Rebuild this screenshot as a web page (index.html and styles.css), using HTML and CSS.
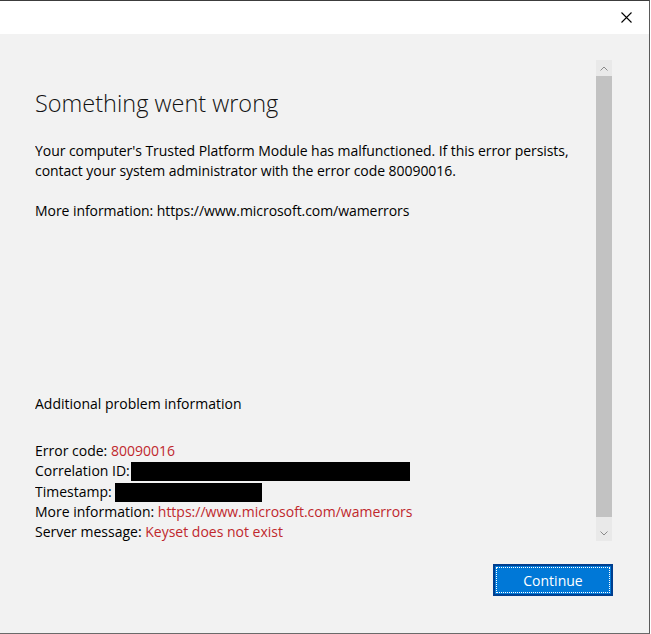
FILE: index.html
```html
<!DOCTYPE html>
<html>
<head>
<meta charset="utf-8">
<link rel="stylesheet" href="styles.css">
</head>
<body>
<div class="window">
  <div class="titlebar">
    <button class="close" aria-label="Close">
      <svg width="11" height="11" viewBox="0 0 11 11"><path d="M0.5 0.5 L10.5 10.5 M10.5 0.5 L0.5 10.5" stroke="#000" stroke-width="1.1" fill="none"/></svg>
    </button>
  </div>
  <div class="client">
    <div class="scrollarea">
      <div class="main">
        <h1 class="heading">Something went wrong</h1>
        <p class="para">Your computer's Trusted Platform Module has malfunctioned. If this error persists, contact your system administrator with the error code 80090016.</p>
        <p class="para">More information: https://www.microsoft.com/wamerrors</p>
        <p class="additional">Additional problem information</p>
        <div class="details">
          <div class="line">Error code: <span class="red">80090016</span></div>
          <div class="line">Correlation ID:<span class="redact redact-corr"></span></div>
          <div class="line">Timestamp: <span class="redact redact-time"></span></div>
          <div class="line">More information: <span class="red">https://www.microsoft.com/wamerrors</span></div>
          <div class="line">Server message: <span class="red">Keyset does not exist</span></div>
        </div>
      </div>
      <div class="scrollbar">
        <div class="sb-btn">
          <svg width="8" height="5" viewBox="0 0 8 5"><path d="M0.5 4.5 L4 1 L7.5 4.5" stroke="#8a8a8a" stroke-width="1" fill="none"/></svg>
        </div>
        <div class="sb-thumb"></div>
        <div class="sb-gap"></div>
        <div class="sb-btn">
          <svg width="8" height="5" viewBox="0 0 8 5"><path d="M0.5 0.5 L4 4 L7.5 0.5" stroke="#8a8a8a" stroke-width="1" fill="none"/></svg>
        </div>
      </div>
    </div>
    <div class="footer">
      <button class="primary"><span class="focus">Continue</span></button>
    </div>
  </div>
</div>
</body>
</html>
```
FILE: styles.css
```css
html, body {
  margin: 0;
  padding: 0;
  background: #ffffff;
}
body {
  font-family: "Open Sans", "Noto Sans", sans-serif;
  color: #000;
}
.window {
  width: 650px;
  height: 634px;
  box-sizing: border-box;
  border-top: 1px solid #3c3c3c;
  border-right: 1px solid #5a5a5a;
  border-bottom: 1px solid #6a6a6a;
  display: flex;
  flex-direction: column;
  background: #f2f2f2;
}
.titlebar {
  height: 33px;
  background: #ffffff;
  display: flex;
  justify-content: flex-end;
  align-items: center;
}
.close {
  width: 46px;
  height: 33px;
  border: 0;
  background: transparent;
  padding: 0;
  display: flex;
  align-items: center;
  justify-content: center;
}
.client {
  flex: 1;
  display: flex;
  flex-direction: column;
  padding: 26px 37px 0 35px;
}
.scrollarea {
  display: flex;
  height: 481px;
}
.main {
  flex: 1;
  overflow: hidden;
}
.heading {
  margin: 27px 0 0 0;
  font-size: 23.5px;
  line-height: 32px;
  font-weight: 300;
  color: #111;
}
.para {
  margin: 22px 0 0 0;
  font-size: 14px;
  line-height: 20px;
  width: 545px;
  letter-spacing: -0.06px;
}
.para + .para {
  margin-top: 20px;
}
.additional {
  margin: 173px 0 0 0;
  font-size: 14px;
  line-height: 20px;
}
.details {
  margin-top: 27px;
  font-size: 14px;
  line-height: 20.25px;
}
.line {
  height: 20.25px;
  white-space: nowrap;
}
.red {
  color: #c0282d;
}
.redact {
  display: inline-block;
  background: #000;
  height: 19px;
  vertical-align: -5px;
}
.redact-corr {
  width: 279px;
  margin-left: 1px;
}
.redact-time {
  width: 147px;
}
.scrollbar {
  width: 16px;
  display: flex;
  flex-direction: column;
  background: #e9e9e9;
}
.sb-btn {
  height: 16px;
  display: flex;
  align-items: center;
  justify-content: center;
}
.sb-thumb {
  flex: 1;
  background: #c2c2c2;
}
.sb-gap {
  height: 8px;
}
.footer {
  display: flex;
  justify-content: flex-end;
  padding-top: 23px;
  margin-right: -1px;
}
.primary {
  width: 120px;
  height: 32px;
  box-sizing: border-box;
  border: 2px solid #003f8f;
  background: #0078d7;
  padding: 1px;
  display: flex;
  font-family: "Open Sans", "Noto Sans", sans-serif;
}
.focus {
  flex: 1;
  border: 1px dotted #ffffff;
  color: #ffffff;
  font-size: 14px;
  display: flex;
  align-items: center;
  justify-content: center;
}
```
